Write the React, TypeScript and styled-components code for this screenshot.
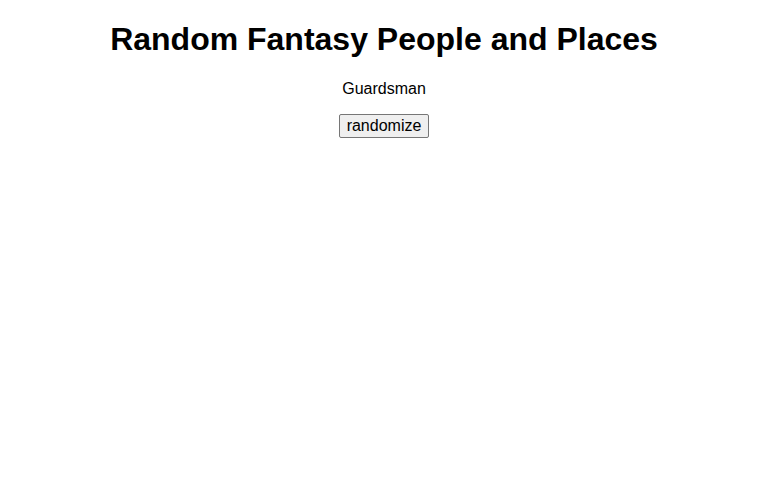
import React, { useState } from 'react';
import styled, { createGlobalStyle } from 'styled-components';

const GlobalStyle = createGlobalStyle`
  body {
    margin: 0;
    background: #ffffff;
    color: #000000;
    font-family: "Liberation Sans", Arial, sans-serif;
  }
`;

const Page = styled.main`
  padding: 0 8px;
  text-align: center;
`;

const Title = styled.h1`
  font-size: 32px;
  font-weight: bold;
  margin: 21.44px 0;
`;

const Result = styled.p`
  font-size: 16px;
  margin: 16px 0;
`;

const RandomizeButton = styled.button`
  font-family: "Liberation Sans", Arial, sans-serif;
  font-size: 16px;
  color: #000000;
  background: #efefef;
  border: 1px solid #767676;
  border-radius: 2px;
  padding: 2px 7px;
  cursor: pointer;

  &:hover {
    background: #e5e5e5;
  }
`;

const things = ['Guardsman', 'Tavern Keeper', 'Old Mill', 'Wandering Bard', 'Ruined Keep'];

export default function App() {
  const [current, setCurrent] = useState('Guardsman');

  const randomize = () => {
    setCurrent(things[Math.floor(Math.random() * things.length)]);
  };

  return (
    <Page>
      <GlobalStyle />
      <Title>Random Fantasy People and Places</Title>
      <Result>{current}</Result>
      <RandomizeButton onClick={randomize}>randomize</RandomizeButton>
    </Page>
  );
}
